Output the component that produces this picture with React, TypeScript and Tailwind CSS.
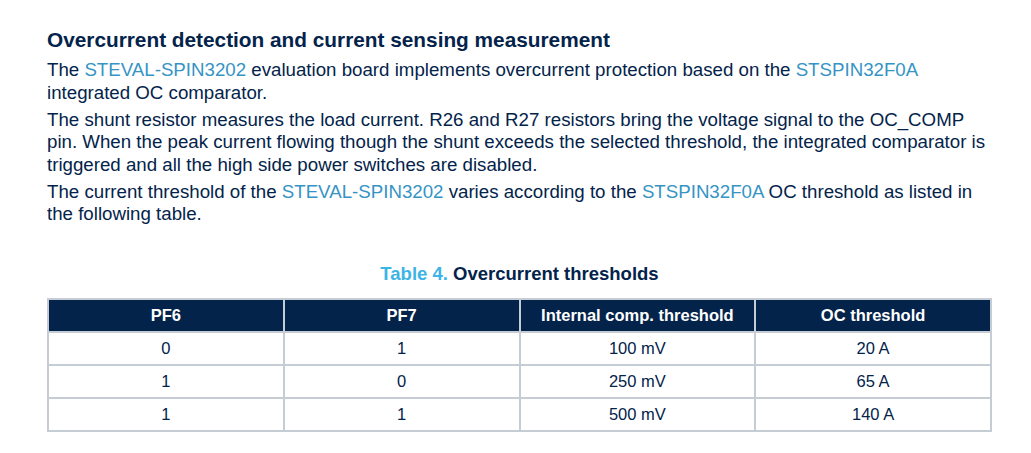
const rows = [
  ["0", "1", "100 mV", "20 A"],
  ["1", "0", "250 mV", "65 A"],
  ["1", "1", "500 mV", "140 A"],
];

const Link = ({ children }: { children: string }) => (
  <span className="text-[#3594c4]">{children}</span>
);

export default function App() {
  return (
    <div className="min-h-screen bg-white px-[47px] pt-[28px] text-[#03234b] font-['Liberation_Sans',Arial,sans-serif]">
      <h2 className="text-[20.8px] font-bold leading-[24px]">
        Overcurrent detection and current sensing measurement
      </h2>
      <div className="mt-[7px] text-[18.7px] leading-[22.5px] space-y-[4.5px] whitespace-nowrap">
        <p>
          The <Link>STEVAL-SPIN3202</Link> evaluation board implements overcurrent protection based on the{" "}
          <Link>STSPIN32F0A</Link>
          <br />
          integrated OC comparator.
        </p>
        <p>
          The shunt resistor measures the load current. R26 and R27 resistors bring the voltage signal to the OC_COMP
          <br />
          pin. When the peak current flowing though the shunt exceeds the selected threshold, the integrated comparator is
          <br />
          triggered and all the high side power switches are disabled.
        </p>
        <p>
          The current threshold of the <Link>STEVAL-SPIN3202</Link> varies according to the <Link>STSPIN32F0A</Link> OC
          threshold as listed in
          <br />
          the following table.
        </p>
      </div>
      <div className="mt-[37px] w-[945px] text-center text-[18.5px] font-bold leading-[22px]">
        <span className="text-[#3cb4e6]">Table 4.</span> Overcurrent thresholds
      </div>
      <table className="mt-[13px] w-[945px] border-collapse table-fixed text-[16.5px]">
        <thead>
          <tr className="bg-[#03234b] text-white">
            {["PF6", "PF7", "Internal comp. threshold", "OC threshold"].map((h) => (
              <th key={h} className="h-[33px] border-2 border-[#c5ccd3] font-bold">
                {h}
              </th>
            ))}
          </tr>
        </thead>
        <tbody>
          {rows.map((r, i) => (
            <tr key={i}>
              {r.map((c, j) => (
                <td key={j} className="h-[33px] border-2 border-[#c5ccd3] text-center">
                  {c}
                </td>
              ))}
            </tr>
          ))}
        </tbody>
      </table>
    </div>
  );
}
